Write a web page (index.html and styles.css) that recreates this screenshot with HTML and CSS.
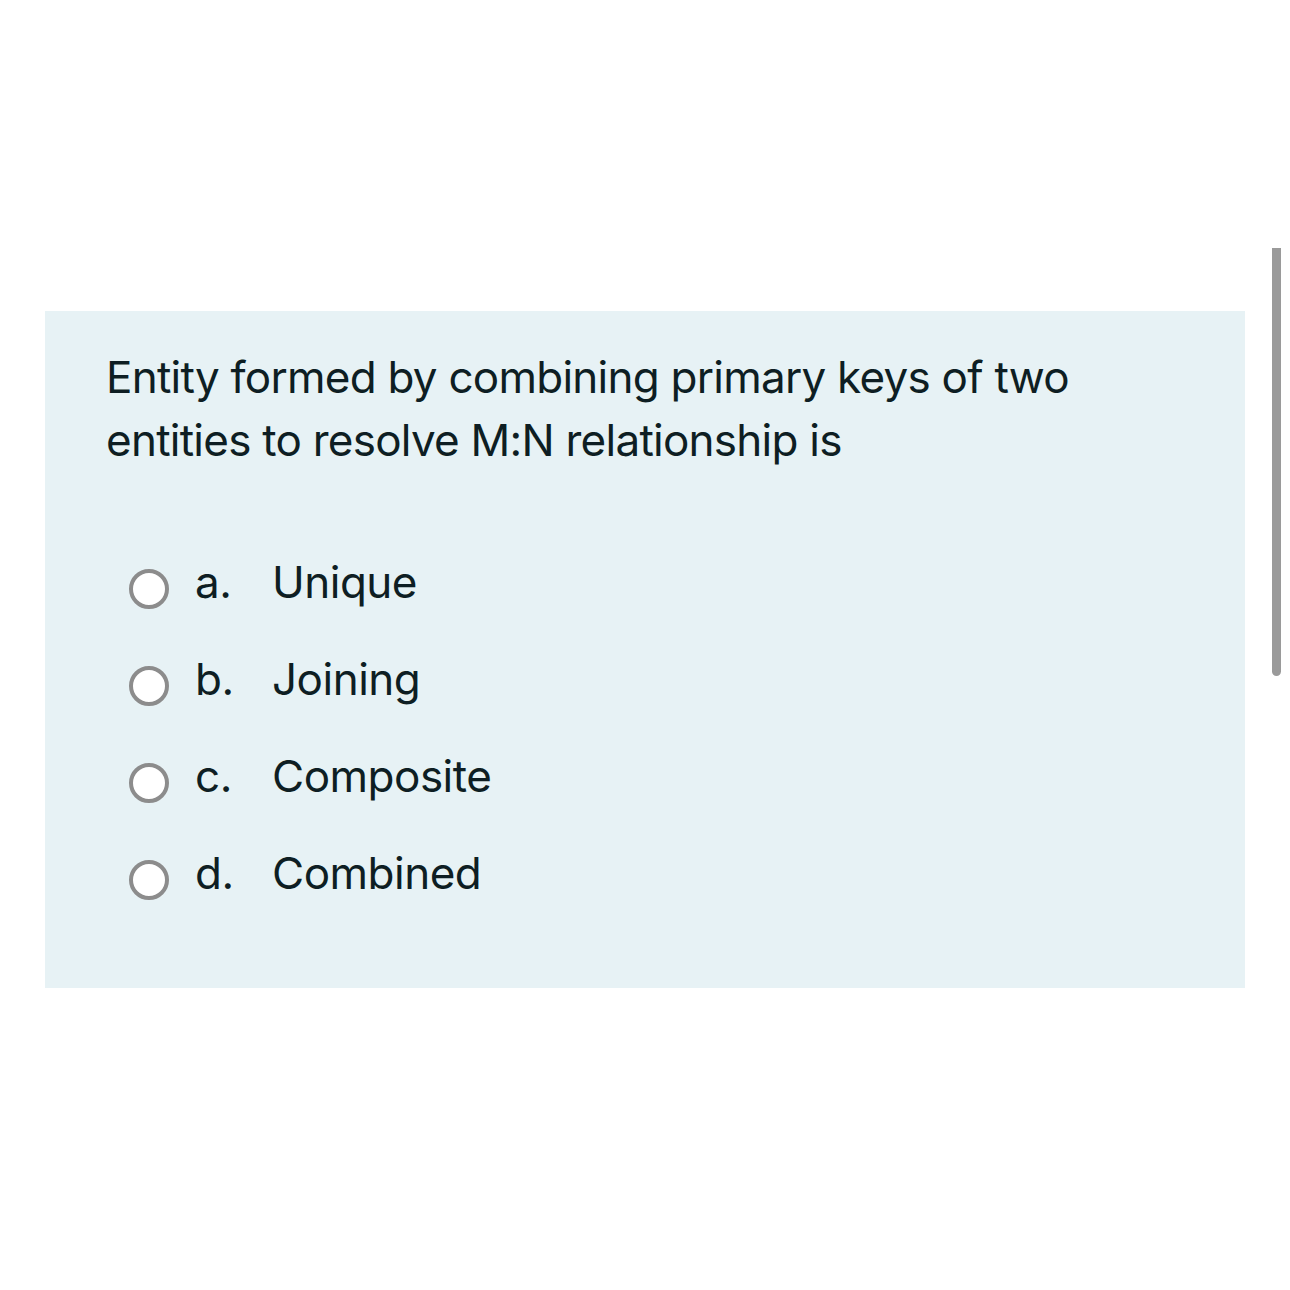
FILE: index.html
```html
<!DOCTYPE html>
<html>
<head>
<meta charset="utf-8">
<link rel="stylesheet" href="styles.css">
</head>
<body>
<div class="page">
  <div class="card">
    <p class="question">Entity formed by combining primary keys of two entities to resolve M:N relationship is</p>
    <div class="options">
      <label class="option"><span class="radio"></span><span class="letter">a.</span><span class="text">Unique</span></label>
      <label class="option"><span class="radio"></span><span class="letter">b.</span><span class="text">Joining</span></label>
      <label class="option"><span class="radio"></span><span class="letter">c.</span><span class="text">Composite</span></label>
      <label class="option"><span class="radio"></span><span class="letter">d.</span><span class="text">Combined</span></label>
    </div>
  </div>
  <div class="scrollbar"></div>
</div>
</body>
</html>
```
FILE: styles.css
```css
html, body {
  margin: 0;
  padding: 0;
  background: #ffffff;
}
body {
  font-family: Inter, "Noto Sans", sans-serif;
  color: #0e1e23;
}
.page {
  position: relative;
  width: 1290px;
  height: 1290px;
  padding-top: 311px;
  box-sizing: border-box;
}
.card {
  margin-left: 45px;
  width: 1200px;
  height: 677px;
  background: #e7f2f5;
  box-sizing: border-box;
  padding: 35px 61px 0 61px;
}
.question {
  margin: 0;
  font-size: 44px;
  line-height: 63px;
  width: 1010px;
  letter-spacing: -0.75px;
}
.options {
  margin-top: 61px;
  display: flex;
  flex-direction: column;
}
.option {
  display: flex;
  align-items: center;
  height: 97px;
  font-size: 44px;
  letter-spacing: -0.5px;
}
.radio {
  width: 40px;
  height: 40px;
  box-sizing: border-box;
  border: 4px solid #8c8c8c;
  border-radius: 50%;
  background: #ffffff;
  margin-left: 23px;
  margin-top: 14px;
  flex: none;
}
.letter {
  margin-left: 26px;
  width: 77px;
}
.scrollbar {
  position: absolute;
  left: 1272px;
  top: 248px;
  width: 9px;
  height: 428px;
  background: #9a9a9a;
  border-radius: 0 0 5px 5px;
}
```
